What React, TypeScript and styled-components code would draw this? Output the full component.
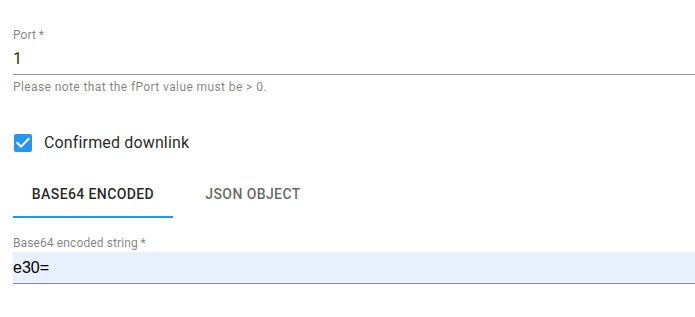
import React, { useState } from "react";
import styled, { createGlobalStyle } from "styled-components";

const Global = createGlobalStyle`
  html, body { margin: 0; padding: 0; background: #fff; }
  body { font-family: Roboto, "Helvetica Neue", Arial, sans-serif; overflow: hidden; }
  * { box-sizing: border-box; }
`;

const Page = styled.div`
  display: flex;
  flex-direction: column;
  padding: 27px 0 0 13px;
  width: 695px;
`;

const Field = styled.div<{ $mt?: number; $mb?: number }>`
  display: flex;
  flex-direction: column;
  margin-top: ${(p) => p.$mt ?? 0}px;
  margin-bottom: ${(p) => p.$mb ?? 0}px;
  width: 100%;
`;

const Label = styled.label`
  display: block;
  height: 16px;
  padding-top: 1.5px;
  font-size: 12px;
  line-height: 12px;
  color: rgba(0, 0, 0, 0.5);
  letter-spacing: 0.00938em;
`;

const InputBox = styled.div<{ $filled?: boolean }>`
  height: 32px;
  padding: 6px 0 7px;
  background: ${(p) => (p.$filled ? "#e8f0fe" : "transparent")};
  border-bottom: 1px solid rgba(0, 0, 0, 0.42);
`;

const Input = styled.input<{ $filled?: boolean }>`
  display: block;
  width: 100%;
  height: 19px;
  border: 0;
  padding: 0;
  margin: 0;
  background: transparent;
  outline: none;
  font-family: ${(p) =>
    p.$filled ? '"Liberation Sans", Arial, sans-serif' : 'Roboto, "Helvetica Neue", Arial, sans-serif'};
  font-size: 16px;
  line-height: 19px;
  color: ${(p) => (p.$filled ? "#000" : "rgba(0, 0, 0, 0.87)")};
  letter-spacing: ${(p) => (p.$filled ? "0" : "0.00938em")};
`;

const Helper = styled.p`
  margin: 3px 0 0;
  font-size: 12px;
  line-height: 1.66;
  color: rgba(0, 0, 0, 0.5);
  letter-spacing: 0.03333em;
`;

const CheckRow = styled.label`
  display: flex;
  align-items: center;
  margin: 16px 0 0 -11px;
  height: 42px;
  cursor: pointer;
`;

const CheckButton = styled.span`
  display: flex;
  align-items: center;
  justify-content: center;
  width: 42px;
  height: 42px;
  padding: 9px;
  color: #2196f3;
`;

const CheckText = styled.span`
  font-size: 16px;
  line-height: 1.5;
  color: rgba(0, 0, 0, 0.87);
  letter-spacing: 0.00938em;
`;

const TabBar = styled.div`
  display: flex;
  margin-top: 6px;
  height: 48px;
`;

const Tab = styled.button<{ $active?: boolean }>`
  position: relative;
  min-width: 160px;
  height: 48px;
  padding: 6px 12px;
  border: 0;
  background: transparent;
  font-family: Roboto, "Helvetica Neue", Arial, sans-serif;
  font-size: 14px;
  font-weight: 500;
  letter-spacing: 0.02857em;
  text-transform: uppercase;
  color: rgba(0, 0, 0, 0.87);
  opacity: ${(p) => (p.$active ? 1 : 0.7)};
  cursor: pointer;
  &::after {
    content: "";
    position: absolute;
    left: 0;
    right: 0;
    bottom: 0;
    height: 2px;
    background: ${(p) => (p.$active ? "#2196f3" : "transparent")};
  }
`;

export default function App() {
  const [tab, setTab] = useState(0);
  return (
    <>
      <Global />
      <Page>
        <Field $mb={8}>
          <Label>Port{"\u2009"}*</Label>
          <InputBox>
            <Input defaultValue="1" />
          </InputBox>
          <Helper>Please note that the fPort value must be &gt; 0.</Helper>
        </Field>
        <CheckRow>
          <CheckButton>
            <svg width="24" height="24" viewBox="0 0 24 24" fill="currentColor">
              <path d="M19 3H5c-1.11 0-2 .9-2 2v14c0 1.1.89 2 2 2h14c1.11 0 2-.9 2-2V5c0-1.1-.89-2-2-2zm-9 14l-5-5 1.41-1.41L10 14.17l7.59-7.59L19 8l-9 9z" />
            </svg>
          </CheckButton>
          <CheckText>Confirmed downlink</CheckText>
        </CheckRow>
        <TabBar>
          <Tab $active={tab === 0} onClick={() => setTab(0)}>Base64 encoded</Tab>
          <Tab $active={tab === 1} onClick={() => setTab(1)}>JSON object</Tab>
        </TabBar>
        <Field $mt={18}>
          <Label>Base64 encoded string{"\u2009"}*</Label>
          <InputBox $filled>
            <Input $filled defaultValue="e30=" />
          </InputBox>
        </Field>
      </Page>
    </>
  );
}
